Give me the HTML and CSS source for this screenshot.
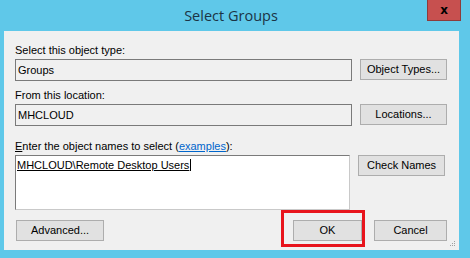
FILE: index.html
```html
<!DOCTYPE html>
<html lang="en">
<head>
    <meta charset="UTF-8">
    <title>Select Groups</title>
    <link rel="stylesheet" href="styles.css">
</head>
<body>
    <div class="window">
        <div class="title-bar">
            <div class="title">Select Groups</div>
            <button class="close-button">x</button>
        </div>

        <div class="panel">
            <div class="label">Select this object type:</div>
            <div class="row">
                <div class="field">Groups</div>
                <button class="btn side-btn">Object Types...</button>
            </div>

            <div class="label label-gap">From this location:</div>
            <div class="row">
                <div class="field">MHCLOUD</div>
                <button class="btn side-btn">Locations...</button>
            </div>

            <div class="label label-gap-lg"><u>E</u>nter the object names to select (<a href="#" class="link">examples</a>):</div>
            <div class="row">
                <div class="names-box"><span class="selected-name">MHCLOUD\Remote Desktop Users</span></div>
                <button class="btn side-btn">Check Names</button>
            </div>

            <div class="footer">
                <button class="btn advanced-btn">Advanced...</button>
                <div class="footer-right">
                    <div class="ok-wrap">
                        <button class="btn ok-btn">OK</button>
                        <div class="highlight"></div>
                    </div>
                    <button class="btn cancel-btn">Cancel</button>
                </div>
            </div>
            <svg class="grip" width="6" height="6" viewBox="0 0 6 6">
                <rect x="4" y="0" width="1" height="1" fill="#a0a0a0"/>
                <rect x="2" y="2" width="1" height="1" fill="#a0a0a0"/>
                <rect x="4" y="2" width="1" height="1" fill="#a0a0a0"/>
                <rect x="0" y="4" width="1" height="1" fill="#a0a0a0"/>
                <rect x="2" y="4" width="1" height="1" fill="#a0a0a0"/>
                <rect x="4" y="4" width="1" height="1" fill="#a0a0a0"/>
            </svg>
        </div>
    </div>
</body>
</html>
```

FILE: styles.css
```css
* {
    margin: 0;
    padding: 0;
    box-sizing: border-box;
}

body {
    width: 470px;
    height: 258px;
    background-color: #5fc8e9;
    font-family: 'Liberation Sans', Arial, sans-serif;
    font-size: 11px;
    color: #000;
    overflow: hidden;
}

.title-bar {
    height: 31px;
    display: grid;
    grid-template-columns: 1fr auto 1fr;
    align-items: start;
}

.title {
    grid-column: 2;
    font-family: 'Open Sans', sans-serif;
    font-size: 14.5px;
    line-height: 18px;
    padding-top: 7px;
    margin-right: 8px;
    color: #1b3445;
}

.close-button {
    grid-column: 3;
    justify-self: end;
    margin-right: 9px;
    width: 34px;
    height: 21px;
    background-color: #c7504f;
    border: 1px solid #8d3b3b;
    border-top: none;
    font-family: 'DejaVu Sans', sans-serif;
    font-weight: bold;
    font-size: 12px;
    line-height: 18px;
    color: #000;
}

.panel {
    position: relative;
    margin-left: 4px;
    width: 455px;
    height: 219px;
    background-color: #f0f0f0;
    padding: 12px 12px 0 11px;
}

.label {
    height: 14px;
    line-height: 14px;
    white-space: nowrap;
}

.label-gap {
    margin-top: 7px;
}

.label-gap-lg {
    margin-top: 13px;
}

.label u {
    text-decoration: underline;
}

.link {
    color: #0066cc;
    text-decoration: underline;
}

.row {
    display: flex;
    gap: 8px;
    align-items: flex-start;
    margin-top: 2px;
}

.field {
    width: 337px;
    height: 22px;
    border: 1px solid #7a7a7a;
    background-color: #f0f0f0;
    padding: 0 2px;
    line-height: 20px;
}

.btn {
    height: 21px;
    background-color: #e1e1e1;
    border: 1px solid #adadad;
    font-family: 'Liberation Sans', Arial, sans-serif;
    font-size: 11px;
    color: #000;
    line-height: 19px;
}

.side-btn {
    width: 87px;
}

.names-box {
    width: 335px;
    height: 55px;
    background-color: #fff;
    border: 1px solid #c9c9c9;
    border-top-color: #7a7a7a;
    border-left-color: #7a7a7a;
    padding: 2px 1px;
    line-height: 14px;
}

.selected-name {
    text-decoration: underline;
    border-right: 1px solid #000;
    padding-right: 1px;
}

.footer {
    display: flex;
    justify-content: space-between;
    margin-top: 10px;
    padding-left: 1px;
}

.advanced-btn {
    width: 88px;
}

.footer-right {
    display: flex;
    gap: 12px;
}

.ok-wrap {
    position: relative;
}

.ok-btn {
    width: 69px;
}

.cancel-btn {
    width: 73px;
}

.highlight {
    position: absolute;
    left: -12px;
    top: -10px;
    width: 84px;
    height: 37px;
    border: 3px solid #e8141c;
}

.grip {
    position: absolute;
    right: 3px;
    bottom: 3px;
}
```
